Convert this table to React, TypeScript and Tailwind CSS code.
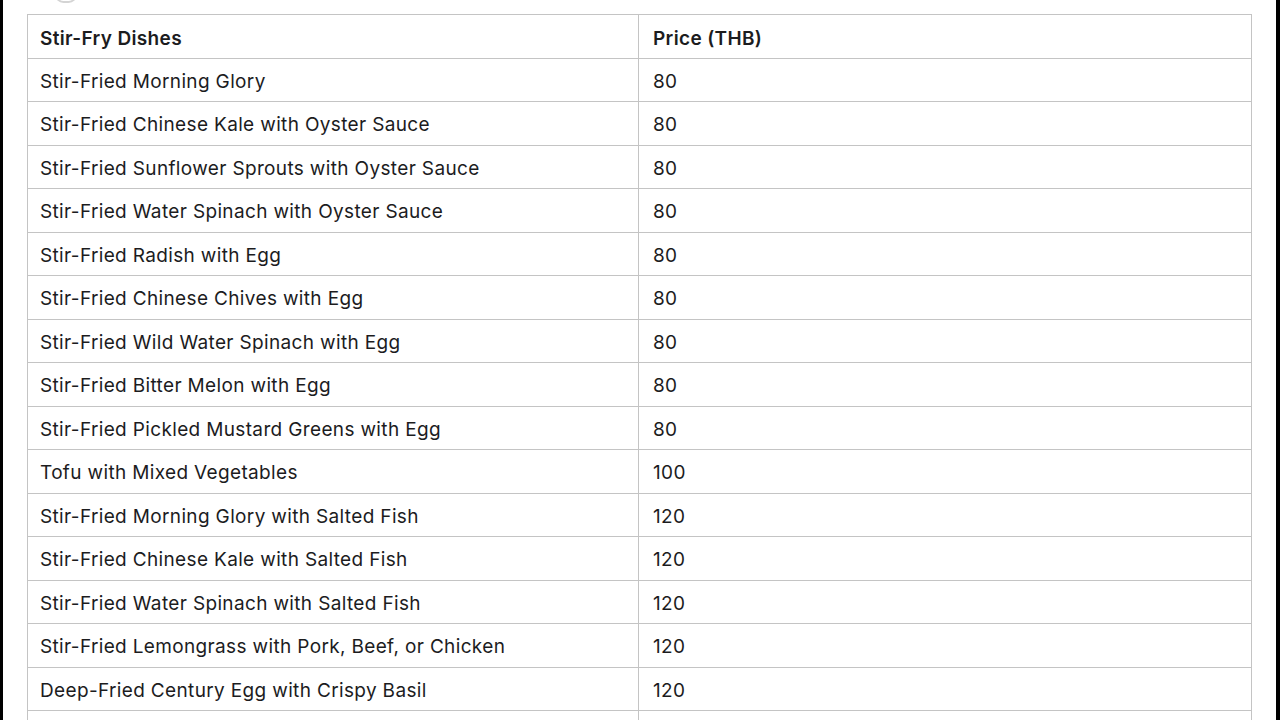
const dishes: [string, number | string][] = [
  ['Stir-Fried Morning Glory', 80],
  ['Stir-Fried Chinese Kale with Oyster Sauce', 80],
  ['Stir-Fried Sunflower Sprouts with Oyster Sauce', 80],
  ['Stir-Fried Water Spinach with Oyster Sauce', 80],
  ['Stir-Fried Radish with Egg', 80],
  ['Stir-Fried Chinese Chives with Egg', 80],
  ['Stir-Fried Wild Water Spinach with Egg', 80],
  ['Stir-Fried Bitter Melon with Egg', 80],
  ['Stir-Fried Pickled Mustard Greens with Egg', 80],
  ['Tofu with Mixed Vegetables', 100],
  ['Stir-Fried Morning Glory with Salted Fish', 120],
  ['Stir-Fried Chinese Kale with Salted Fish', 120],
  ['Stir-Fried Water Spinach with Salted Fish', 120],
  ['Stir-Fried Lemongrass with Pork, Beef, or Chicken', 120],
  ['Deep-Fried Century Egg with Crispy Basil', 120],
  ['', ''],
];

export default function App() {
  return (
    <div className="flex h-[720px] w-[1280px] overflow-hidden bg-black">
      <div className="relative ml-[3px] mr-[4px] flex-1 overflow-hidden bg-white pl-[24px] pr-[24px] pt-[14px]">
        <div className="absolute left-[52px] top-[-14px] h-[17px] w-[22px] rounded-full border-[2px] border-[#d4d4d4]" />
        <table
          className="w-full table-fixed border-collapse text-[19px] tracking-[0.35px] text-[#1c1c1e]"
          style={{ fontFamily: 'Inter, "Open Sans", sans-serif' }}
        >
          <colgroup>
            <col className="w-[611px]" />
            <col />
          </colgroup>
          <thead>
            <tr className="h-[43.5px]">
              <th className="border border-[#c4c4c4] px-[12px] pt-[5px] text-left font-semibold">Stir-Fry Dishes</th>
              <th className="border border-[#c4c4c4] px-[14px] pt-[5px] text-left font-semibold">Price (THB)</th>
            </tr>
          </thead>
          <tbody>
            {dishes.map(([name, price], i) => (
              <tr key={i} className="h-[43.5px]">
                <td className="border border-[#c4c4c4] px-[12px] pt-[4px] font-normal">{name}</td>
                <td className="border border-[#c4c4c4] px-[14px] pt-[4px]">{price}</td>
              </tr>
            ))}
          </tbody>
        </table>
      </div>
    </div>
  );
}
